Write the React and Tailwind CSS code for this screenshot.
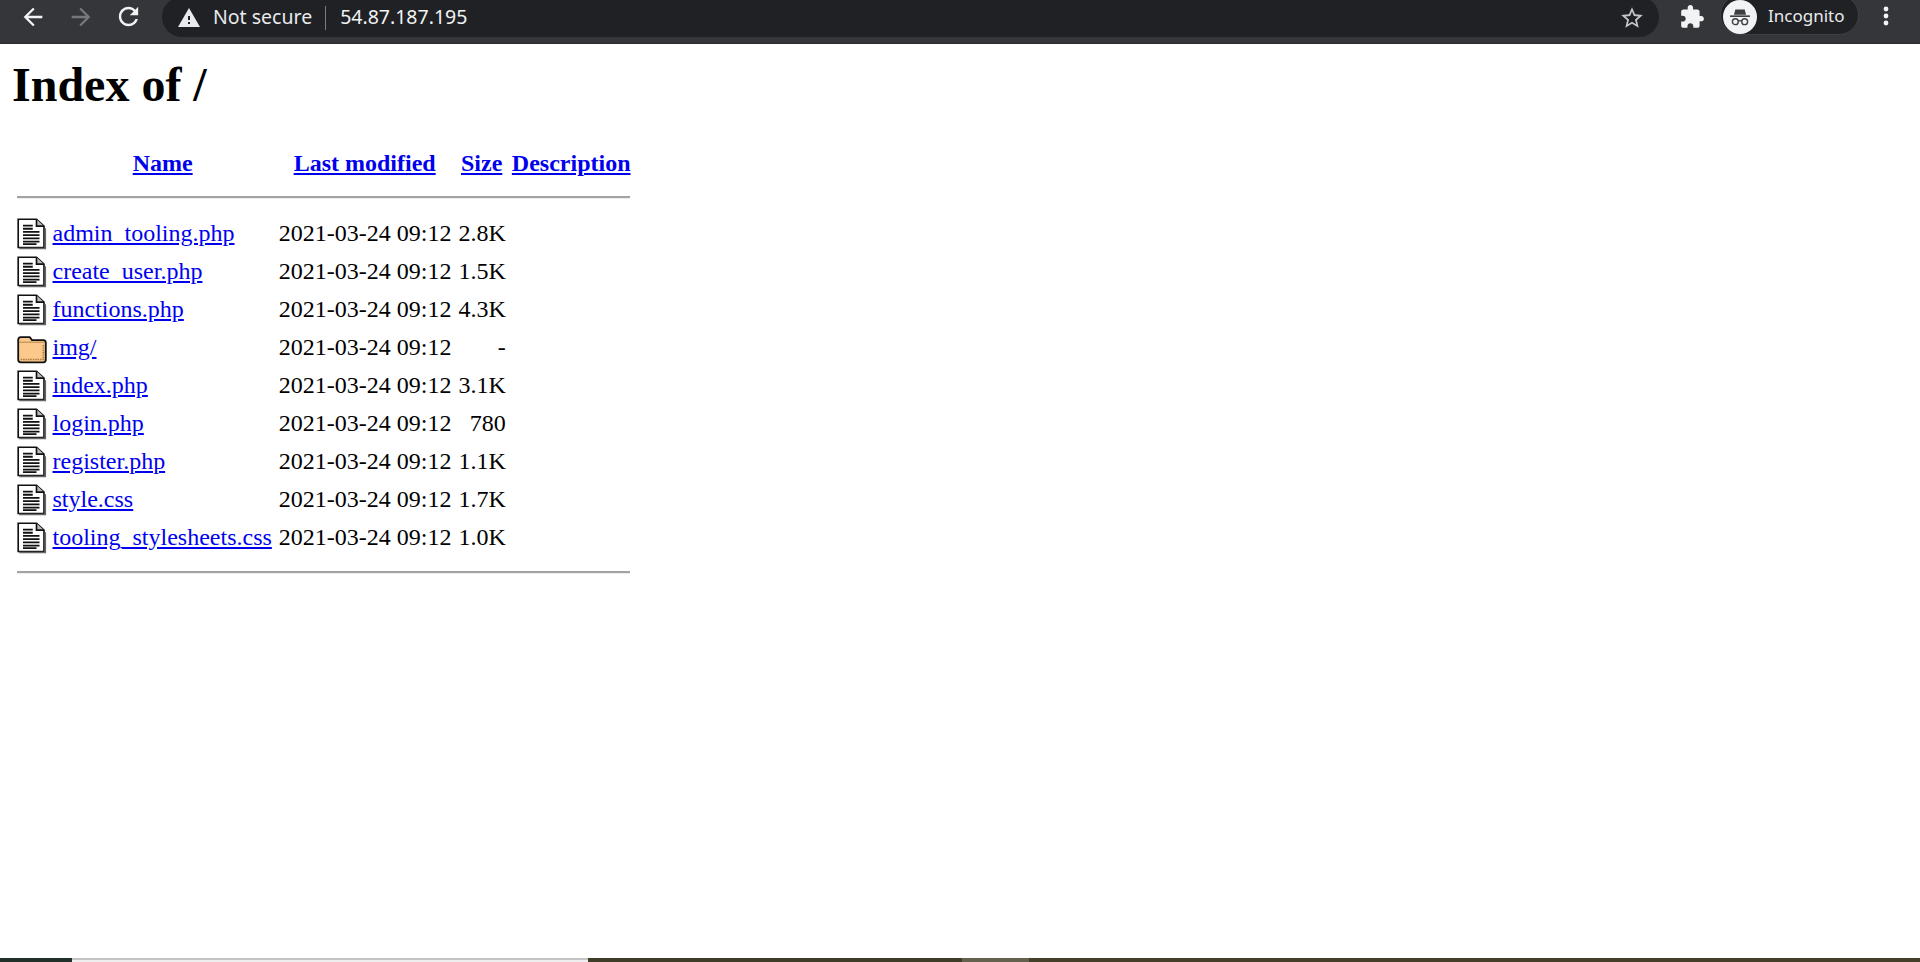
const files = [
  { name: "admin_tooling.php", size: "2.8K" },
  { name: "create_user.php", size: "1.5K" },
  { name: "functions.php", size: "4.3K" },
  { name: "img/", size: "-", folder: true },
  { name: "index.php", size: "3.1K" },
  { name: "login.php", size: "780" },
  { name: "register.php", size: "1.1K" },
  { name: "style.css", size: "1.7K" },
  { name: "tooling_stylesheets.css", size: "1.0K" },
];

function Glyph({ d, className }) {
  return (
    <svg viewBox="0 0 24 24" className={className} fill="currentColor">
      <path d={d} />
    </svg>
  );
}

function FileIcon() {
  return (
    <svg viewBox="0 0 20 22" preserveAspectRatio="none" className="block h-[32px] w-[30px]">
      <path d="M0.8 0.9H13L18 5.6V20.3H0.8Z" fill="#fff" stroke="#111" strokeWidth="1.1" />
      <path d="M13 0.9V5.6H18" fill="#bbb" stroke="#111" strokeWidth="1.1" />
      <path d="M1.5 21H18.9V7" fill="none" stroke="#666" strokeWidth="1" />
      <path
        d="M4 5.2H10.5M4 7.4H10.5M4 9.6H15M4 11.8H15M4 14H15M4 16.2H15M4 18H13"
        stroke="#111"
        strokeWidth="1.25"
      />
    </svg>
  );
}

function FolderIcon() {
  return (
    <svg viewBox="0 0 20 22" preserveAspectRatio="none" className="block h-[32px] w-[30px]">
      <path
        d="M0.8 7V19Q0.8 20.8 2.6 20.8H17.6Q19.2 20.8 19.2 19V7.5Q19.2 5.6 17.6 5.6H10L8.5 3.6H2.6Q0.8 3.6 0.8 5.5Z"
        fill="#fcc88c"
        stroke="#111"
        strokeWidth="1.2"
      />
      <path d="M1.5 7H18.5" stroke="#a9793f" strokeWidth="0.6" />
      <path d="M2.5 18.9H17.6V9" fill="none" stroke="#a9793f" strokeWidth="1.1" strokeDasharray="1 0.6" />
    </svg>
  );
}

function Toolbar() {
  return (
    <div className="flex h-[44px] shrink-0 items-start overflow-hidden border-b border-[#2a2b2e] bg-[#35363a] font-['Noto_Sans',sans-serif] text-white">
      <Glyph
        className="ml-[19px] mt-[3px] h-[28px] w-[28px] text-[#f1f3f4]"
        d="M20 11H7.83l5.59-5.59L12 4l-8 8 8 8 1.41-1.41L7.83 13H20v-2z"
      />
      <Glyph
        className="ml-[20px] mt-[3px] h-[28px] w-[28px] text-[#77787b]"
        d="M12 4l-1.41 1.41L16.17 11H4v2h12.17l-5.58 5.59L12 20l8-8z"
      />
      <Glyph
        className="ml-[19px] mt-[2px] h-[29px] w-[29px] text-[#f1f3f4]"
        d="M17.65 6.35C16.2 4.9 14.21 4 12 4c-4.42 0-7.99 3.58-7.99 8s3.57 8 7.99 8c3.73 0 6.84-2.55 7.73-6h-2.08c-.82 2.33-3.04 4-5.65 4-3.31 0-6-2.69-6-6s2.69-6 6-6c1.66 0 3.14.69 4.22 1.78L13 11h7V4l-2.35 2.35z"
      />
      <div className="ml-[19px] mt-[-3px] flex h-[40px] w-[1497px] items-center rounded-full bg-[#202124] pl-[15px] pt-[1px] text-[19.5px]">
        <Glyph
          className="h-[24px] w-[24px] text-[#e8eaed]"
          d="M1 21h22L12 2 1 21zm12-3h-2v-2h2v2zm0-4h-2v-4h2v4z"
        />
        <span className="ml-[12px] mt-[-2px] text-[#e8eaed]">Not secure</span>
        <span className="ml-[13px] h-[24px] w-px bg-[#7b7c7f]" />
        <span className="ml-[14px] mt-[-2px] text-[19.5px] text-[#f1f3f4]">54.87.187.195</span>
        <Glyph
          className="ml-auto mr-[14px] h-[26px] w-[26px] text-[#c4c6c9]"
          d="M22 9.24l-7.19-.62L12 2 9.19 8.63 2 9.24l5.46 4.73L5.82 21 12 17.27 18.18 21l-1.63-7.03L22 9.24zM12 15.4l-3.76 2.27 1-4.28-3.32-2.88 4.38-.38L12 6.1l1.71 4.04 4.38.38-3.32 2.88 1 4.28L12 15.4z"
        />
      </div>
      <Glyph
        className="ml-[20px] mt-[4px] h-[26px] w-[26px] text-[#f1f3f4]"
        d="M20.5 11H19V7c0-1.1-.9-2-2-2h-4V3.5C13 2.12 11.88 1 10.5 1S8 2.12 8 3.5V5H4c-1.1 0-1.99.9-1.99 2v3.8H3.5c1.49 0 2.7 1.21 2.7 2.7s-1.21 2.7-2.7 2.7H2V20c0 1.1.9 2 2 2h3.8v-1.5c0-1.49 1.21-2.7 2.7-2.7 1.49 0 2.7 1.21 2.7 2.7V22H17c1.1 0 2-.9 2-2v-4h1.5c1.38 0 2.5-1.12 2.5-2.5S21.88 11 20.5 11z"
      />
      <div className="ml-[15px] mt-[-5px] flex h-[40px] w-[139px] items-center rounded-full border border-[#3f4044] bg-[#202124] pl-[2px] pt-[4px]">
        <div className="flex h-[34px] w-[34px] items-center justify-center rounded-full bg-[#f1f3f4]">
          <svg viewBox="0 0 24 24" className="h-[28px] w-[28px]" fill="#3c4043">
            <path d="M8 5.5h8l1.2 4.5H6.8z" />
            <rect x="3.5" y="10.6" width="17" height="1.4" />
            <circle cx="8" cy="16" r="2.5" fill="none" stroke="#3c4043" strokeWidth="1.2" />
            <circle cx="16" cy="16" r="2.5" fill="none" stroke="#3c4043" strokeWidth="1.2" />
            <path d="M10.5 15.6q1.5-.9 3 0" fill="none" stroke="#3c4043" strokeWidth="1.1" />
          </svg>
        </div>
        <span className="ml-[11px] mt-[-2px] text-[17px] text-[#e8eaed]">Incognito</span>
      </div>
      <svg viewBox="0 0 6 20" className="ml-[24px] mt-[6px] h-[20px] w-[6px]" fill="#f1f3f4">
        <circle cx="3" cy="3" r="2.4" />
        <circle cx="3" cy="10" r="2.4" />
        <circle cx="3" cy="17" r="2.4" />
      </svg>
    </div>
  );
}

function Rule() {
  return <div className="h-[3px] border-t-2 border-b border-t-[#a3a3a3] border-b-[#eeeeee]" />;
}

export default function App() {
  return (
    <div className="flex h-screen flex-col overflow-hidden bg-white">
      <Toolbar />

      <main className="flex-1 pl-[12px] font-['Liberation_Serif',serif] text-[24px] leading-[27.6px] text-black">
        <h1 className="mb-[33px] mt-[13px] text-[48px] font-bold leading-[55px]">Index of /</h1>

        <table className="border-separate border-spacing-[3px]">
          <tbody>
            <tr className="text-center font-bold text-[#0000ee] underline">
              <th className="p-[1.5px]"></th>
              <th className="p-[1.5px]">Name</th>
              <th className="py-[1.5px] pl-[1.5px] pr-[3.5px]">Last modified</th>
              <th className="py-[1.5px] pl-[1.5px] pr-[2.5px]">Size</th>
              <th className="p-[1.5px]">Description</th>
            </tr>
            <tr>
              <th colSpan={5} className="px-[1.5px] pb-[1.5px] pt-[14px]">
                <Rule />
                <div className="h-[13px]" />
              </th>
            </tr>
            {files.map((file) => (
              <tr key={file.name}>
                <td className="p-[1.5px] align-top">
                  {file.folder ? <FolderIcon /> : <FileIcon />}
                </td>
                <td className="py-[1.5px] pl-[1.5px] pr-[2.5px]">
                  <a href="#" className="text-[#0000ee] underline">
                    {file.name}
                  </a>
                </td>
                <td className="py-[1.5px] pl-[1.5px] pr-[2.5px] text-right">2021-03-24 09:12</td>
                <td className="p-[1.5px] text-right">{file.size}</td>
                <td className="p-[1.5px]"></td>
              </tr>
            ))}
            <tr>
              <th colSpan={5} className="px-[1.5px] pt-[12.5px]">
                <Rule />
              </th>
            </tr>
          </tbody>
        </table>
      </main>

      <div className="flex h-[4px] shrink-0">
        <div className="w-[72px] bg-[#22302a]" />
        <div className="w-[516px] border-t-2 border-t-[#c4c4c4] bg-[#eeeeee]" />
        <div className="w-[374px] bg-[#3f3c28]" />
        <div className="w-[67px] bg-[#64624f]" />
        <div className="flex-1 bg-[#433f28]" />
      </div>
    </div>
  );
}
